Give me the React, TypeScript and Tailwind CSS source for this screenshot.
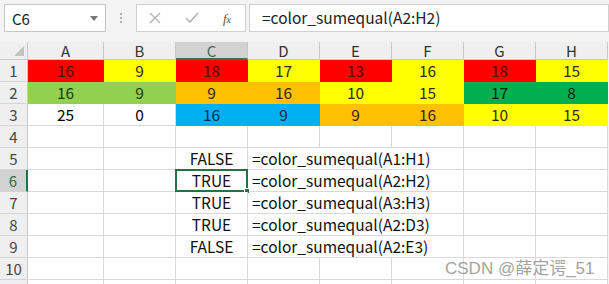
import React from "react";

const font = { fontFamily: '"Noto Sans CJK SC", "Noto Sans", sans-serif' };

const R = "#ff0000", Y = "#ffff00", G = "#92d050", O = "#ffc000", B = "#00b0f0", DG = "#00b050", W = "";
const fgFor = (bg: string) =>
  bg === R ? "#5c0505" : bg === Y ? "#2e2e00" : bg === G ? "#1d3a08" : bg === O ? "#3a2600" : bg === B ? "#002e45" : bg === DG ? "#00240f" : "#000000";

const rows: [string, string][][] = [
  [["16", R], ["9", Y], ["18", R], ["17", Y], ["13", R], ["16", Y], ["18", R], ["15", Y]],
  [["16", G], ["9", G], ["9", O], ["16", O], ["10", Y], ["15", Y], ["17", DG], ["8", DG]],
  [["25", W], ["0", W], ["16", B], ["9", B], ["9", O], ["16", O], ["10", Y], ["15", Y]],
];

const results: [string, string][] = [
  ["FALSE", "=color_sumequal(A1:H1)"],
  ["TRUE", "=color_sumequal(A2:H2)"],
  ["TRUE", "=color_sumequal(A3:H3)"],
  ["TRUE", "=color_sumequal(A2:D3)"],
  ["FALSE", "=color_sumequal(A2:E3)"],
];

const cols = ["A", "B", "C", "D", "E", "F", "G", "H"];

function RowHead({ n, sel }: { n?: number; sel?: boolean }) {
  return (
    <div
      className={
        "flex items-center justify-center text-[15px] leading-none border-b border-[#d4d4d4] " +
        (sel ? "bg-[#d2d2d2] text-[#2f6e46] border-r-2 border-r-[#217346]" : "bg-[#efefef] text-[#444] border-r border-r-[#c8c8c8]")
      }
    >
      {n}
    </div>
  );
}

function Empty() {
  return <div className="bg-white border-r border-b border-[#d9d9d9]" />;
}

export default function App() {
  return (
    <div className="relative w-[609px] h-[284px] overflow-hidden bg-[#f3f3f3]" style={font}>
      {/* formula bar */}
      <div className="flex h-[42px] items-start pt-[4px]">
        <div className="ml-[4px] w-[102px] h-[28px] bg-white border border-[#c6c6c6] flex items-center justify-between pl-[7px] pr-[7px]">
          <span className="text-[15px] leading-none text-[#222]">C6</span>
          <svg width="8" height="5" viewBox="0 0 8 5"><path d="M0 0h8L4 5z" fill="#777" /></svg>
        </div>
        <div className="w-[30px] h-[28px] flex flex-col items-center justify-center gap-[2px]">
          <span className="w-[2px] h-[2px] bg-[#b0b0b0]" />
          <span className="w-[2px] h-[2px] bg-[#b0b0b0]" />
          <span className="w-[2px] h-[2px] bg-[#b0b0b0]" />
        </div>
        <div className="w-[110px] h-[28px] bg-white border border-[#d0d0d0] flex items-center justify-around pr-[2px]">
          <svg width="12" height="12" viewBox="0 0 12 12"><path d="M1 1l10 10M11 1L1 11" stroke="#b3b3b3" strokeWidth="1.4" /></svg>
          <svg width="14" height="12" viewBox="0 0 14 12"><path d="M1 6l4 4 8-9" stroke="#b3b3b3" strokeWidth="1.6" fill="none" /></svg>
          <span className="text-[13px] leading-none italic text-[#555]" style={{ fontFamily: '"Liberation Serif", serif' }}>
            f<span className="text-[10px]">x</span>
          </span>
        </div>
        <div className="ml-[3px] flex-1 h-[28px] bg-white border border-[#d0d0d0] flex items-center pl-[12px]">
          <span className="text-[15.5px] leading-none text-[#222]">=color_sumequal(A2:H2)</span>
        </div>
      </div>

      {/* sheet grid */}
      <div className="grid grid-cols-[28px_76px_repeat(7,72px)] grid-rows-[18px_repeat(11,22px)]">
        <div className="relative bg-[#efefef] border-r border-b border-[#c8c8c8]">
          <svg className="absolute right-[3px] bottom-[3px]" width="10" height="10" viewBox="0 0 10 10">
            <path d="M10 0V10H0z" fill="#c4c4c4" />
          </svg>
        </div>
        {cols.map((c) => (
          <div
            key={c}
            className={
              "flex items-center justify-center text-[15px] leading-none " +
              (c === "C"
                ? "bg-[#d2d2d2] text-[#3c6e52] border-b-2 border-b-[#3e6f53] border-r border-r-[#c8c8c8]"
                : "bg-[#efefef] text-[#333] border-r border-b border-[#c8c8c8]")
            }
          >
            {c}
          </div>
        ))}

        {rows.map((r, i) => (
          <React.Fragment key={i}>
            <RowHead n={i + 1} />
            {r.map(([v, bg], j) => (
              <div
                key={j}
                className="flex items-center justify-center text-[15.5px] leading-none border-r border-b"
                style={{ background: bg || "#ffffff", borderColor: bg || "#d9d9d9", color: fgFor(bg) }}
              >
                {v}
              </div>
            ))}
          </React.Fragment>
        ))}

        <RowHead n={4} />
        {cols.map((c) => (
          <Empty key={c} />
        ))}

        {results.map(([res, f], i) => (
          <React.Fragment key={i}>
            <RowHead n={i + 5} sel={i === 1} />
            <Empty />
            <Empty />
            <div className="relative bg-white border-r border-b border-[#d9d9d9] flex items-center justify-center text-[15.5px] leading-none text-[#111]">
              {res}
              {i === 1 && (
                <div className="absolute left-[-1px] top-[-1px] w-[73px] h-[23px] border-2 border-[#217346]">
                  <div className="absolute right-[-4px] bottom-[-4px] w-[6px] h-[6px] bg-[#217346] border border-white" />
                </div>
              )}
            </div>
            <div className="col-span-3 bg-white border-r border-b border-[#d9d9d9] flex items-center pl-[4px] text-[15.5px] leading-none text-[#111] whitespace-nowrap">
              {f}
            </div>
            <Empty />
            <Empty />
          </React.Fragment>
        ))}

        <RowHead n={10} />
        {cols.map((c) => (
          <Empty key={c} />
        ))}
        <RowHead />
        {cols.map((c) => (
          <Empty key={c} />
        ))}
      </div>

      <div
        className="absolute left-[445px] top-[258px] text-[17px] leading-[22px] text-[#a3a3a3] whitespace-nowrap"
        style={{ fontFamily: '"Liberation Sans", "Noto Sans CJK SC", sans-serif' }}
      >
        CSDN @薛定谔_51
      </div>
    </div>
  );
}
